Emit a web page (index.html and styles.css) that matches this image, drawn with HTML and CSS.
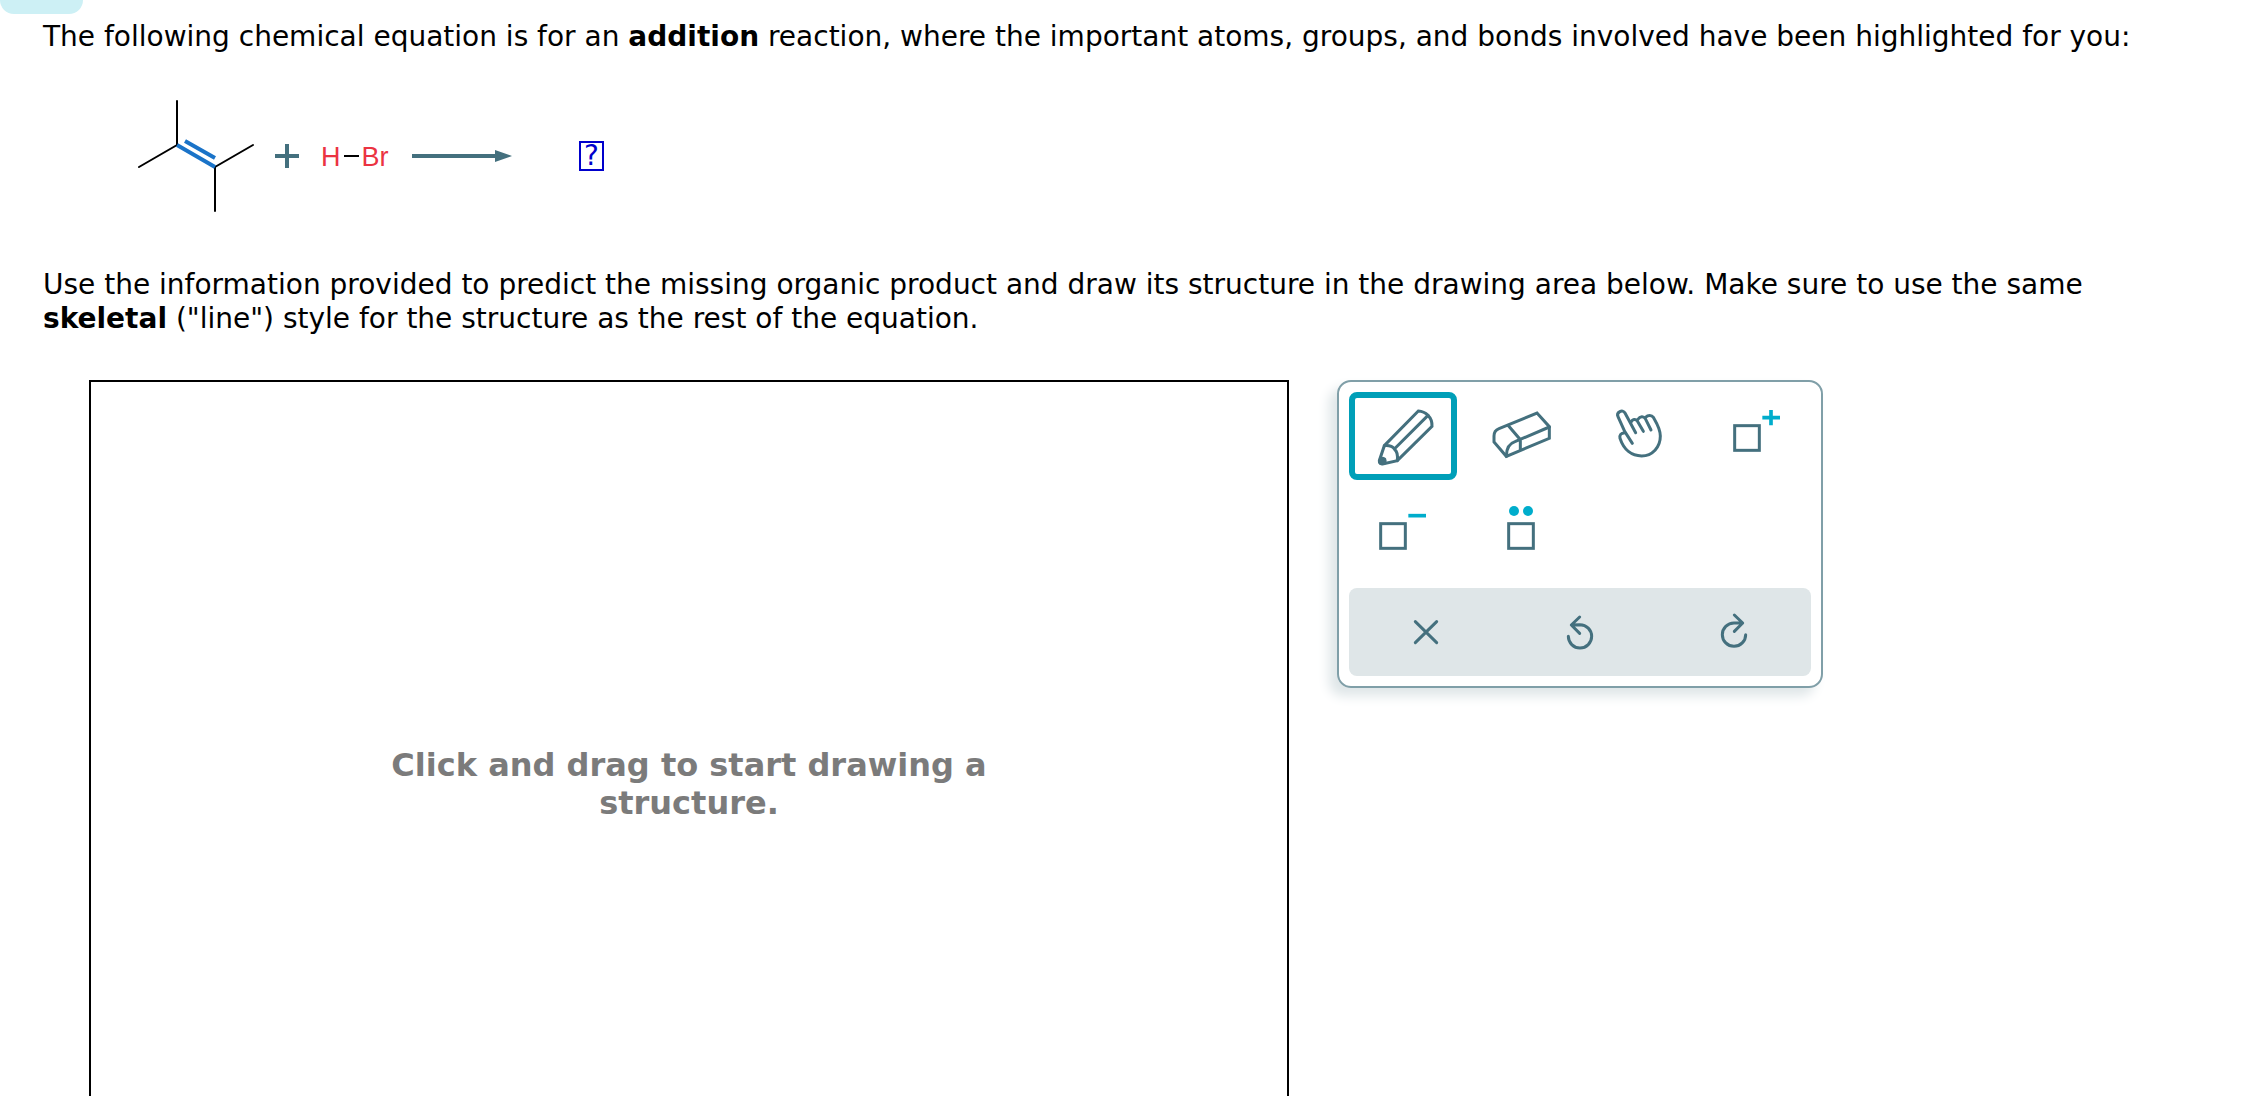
FILE: index.html
```html
<!DOCTYPE html>
<html lang="en">
<head>
    <meta charset="UTF-8">
    <meta name="viewport" content="width=device-width, initial-scale=1.0">
    <title>Addition reaction</title>
    <link rel="stylesheet" href="styles.css">
</head>
<body>
    <div class="tab"></div>
    <main class="question">
        <p>The following chemical equation is for an <b>addition</b> reaction, where the important atoms, groups, and bonds involved have been highlighted for you:</p>

        <div class="equation">
            <svg class="molecule" width="118" height="112" viewBox="0 0 118 112">
                <path class="bond" d="M40 1V45L2 67M116 45L78 67V111"/>
                <path class="double-bond" d="M40 45L78 67M48 41L78 58"/>
            </svg>
            <svg class="sign" width="26" height="26" viewBox="0 0 26 26">
                <path d="M0 13H24M12 1V25"/>
            </svg>
            <div class="hbr"><span>H</span><span class="dash"></span><span>Br</span></div>
            <svg class="arrow" width="102" height="14" viewBox="0 0 102 14">
                <path d="M1 5H84V1L101 7L84 13V9H1Z"/>
            </svg>
            <span class="unknown">?</span>
        </div>

        <p>Use the information provided to predict the missing organic product and draw its structure in the drawing area below. Make sure to use the same <b>skeletal</b> ("line") style for the structure as the rest of the equation.</p>

        <div class="workspace">
            <div class="canvas">
                <p class="hint">Click and drag to start drawing a structure.</p>
            </div>

            <div class="toolbox">
                <button class="tool selected" aria-label="Draw">
                    <svg viewBox="0 0 288 228">
                        <path d="M88 143L190 39Q207 40 219 52Q232 65 231 85L127 188L83 198Q72 197 73 188Z"/>
                        <path d="M88 143Q110 141 118 153Q130 163 127 188M118 153L219 52"/>
                        <path class="lead" d="M72 181Q84 172 93 181Q98 190 92 199L80 202Q70 200 69 191Z"/>
                    </svg>
                </button>
                <button class="tool" aria-label="Erase">
                    <svg viewBox="0 0 288 228">
                        <path d="M63 132V114Q63 98 78 92L192 45L229 86V121L100 175L63 132Z"/>
                        <path d="M105 82L142 125V154M100 175Q100 139 126 131L229 87"/>
                    </svg>
                </button>
                <button class="tool" aria-label="Move">
                    <svg viewBox="0 0 288 228">
                        <path d="M124 136L101 100M134 104L102 45C95 32 75 43 81 56L101 100"/>
                        <path d="M101 104Q84 106 87 121C98 155 122 174 152 174C184 174 208 148 208 114C208 92 198 77 187 58C182 50 170 51 165 57"/>
                        <path d="M120 73C124 62 134 62 139 69L157 100M141 64C147 54 158 54 163 62L180 96"/>
                    </svg>
                </button>
                <button class="tool" aria-label="Positive charge">
                    <svg viewBox="0 0 288 228">
                        <rect x="77" y="83" width="74" height="74"/>
                        <path class="charge" d="M160 59H213M186 36V82"/>
                    </svg>
                </button>
                <button class="tool" aria-label="Negative charge">
                    <svg viewBox="0 0 288 228">
                        <rect x="77" y="83" width="74" height="74"/>
                        <path class="charge" d="M160 59H213"/>
                    </svg>
                </button>
                <button class="tool" aria-label="Lone pair">
                    <svg viewBox="0 0 288 228">
                        <rect x="107" y="83" width="74" height="74"/>
                        <circle class="dot" cx="123" cy="45" r="15"/>
                        <circle class="dot" cx="165" cy="45" r="15"/>
                    </svg>
                </button>

                <div class="actions">
                    <button aria-label="Clear">
                        <svg viewBox="0 0 144 144"><path d="M40 41L104 104M104 41L40 104"/></svg>
                    </button>
                    <button aria-label="Undo">
                        <svg viewBox="0 0 144 144"><path d="M37 85A35 35 0 1 0 72 50L46 51M71 27L46 51L71 76"/></svg>
                    </button>
                    <button aria-label="Redo">
                        <svg viewBox="0 0 144 144"><path d="M107 80A35 35 0 1 1 72 45H98M73 21L98 45L73 70"/></svg>
                    </button>
                </div>
            </div>
        </div>
    </main>
</body>
</html>
```

FILE: styles.css
```css
* {
    box-sizing: border-box;
}
body {
    margin: 0;
    background-color: white;
    color: black;
    font-family: Verdana, "DejaVu Sans", sans-serif;
    font-size: 28px;
    line-height: 34px;
}
p {
    margin: 0;
}
.tab {
    width: 83px;
    height: 14px;
    background-color: #cdf0f5;
    border-radius: 0 0 16px 16px;
}
.question {
    padding: 6px 43px 0;
}
.equation {
    display: flex;
    align-items: center;
    gap: 20px;
    margin: 46px 94px 56px;
}
.bond {
    fill: none;
    stroke: black;
    stroke-width: 2;
    stroke-linecap: round;
}
.double-bond {
    fill: none;
    stroke: #1a73c8;
    stroke-width: 4;
}
.sign {
    stroke: #44707e;
    stroke-width: 4;
}
.arrow {
    fill: #44707e;
}
.hbr {
    display: flex;
    align-items: center;
    gap: 3px;
    width: 70px;
    color: #eb3342;
    font-family: Arial, "Liberation Sans", sans-serif;
    font-size: 27px;
    line-height: 38px;
}
.hbr span {
    padding-top: 2px;
}
.hbr .dash {
    flex: none;
    width: 15px;
    height: 2px;
    background-color: black;
}
.unknown {
    width: 25px;
    margin-left: 46px;
    border: 2px solid #0000cc;
    color: #0000cc;
    line-height: 26px;
    text-align: center;
}
.workspace {
    display: flex;
    align-items: flex-start;
    gap: 48px;
    margin: 44px 0 0 46px;
}
.canvas {
    display: flex;
    align-items: center;
    justify-content: center;
    flex: 0 1 1200px;
    min-height: 808px;
    border: 2px solid black;
}
.hint {
    max-width: 640px;
    color: #7b7b7b;
    font-size: 32px;
    font-weight: bold;
    line-height: 38px;
    text-align: center;
}
.toolbox {
    display: grid;
    grid-template-columns: repeat(4, 108px);
    gap: 10px;
    padding: 10px;
    border: 2px solid #809fa8;
    border-radius: 14px;
    box-shadow: -8px 8px 12px #dfe6e8;
}
button {
    padding: 0;
    border: none;
    background: none;
    cursor: pointer;
}
.tool {
    height: 88px;
    border: 6px solid transparent;
    border-radius: 8px;
}
.selected {
    border-color: #009fb8;
}
.tool svg,
.actions svg {
    display: block;
    fill: none;
    stroke: #44707e;
    stroke-width: 9;
}
.tool svg {
    width: 96px;
    height: 76px;
    stroke-linecap: round;
}
.tool .lead {
    fill: #44707e;
    stroke: none;
}
.tool .charge {
    stroke: #00adcc;
    stroke-width: 11;
    stroke-linecap: butt;
}
.tool .dot {
    fill: #00adcc;
    stroke: none;
}
.actions {
    display: grid;
    grid-column: 1 / -1;
    grid-template-columns: repeat(3, 1fr);
    height: 88px;
    background-color: #dfe6e8;
    border-radius: 8px;
}
.actions svg {
    width: 48px;
    height: 48px;
    margin: 0 auto;
    stroke-linecap: round;
    stroke-linejoin: round;
}
```
